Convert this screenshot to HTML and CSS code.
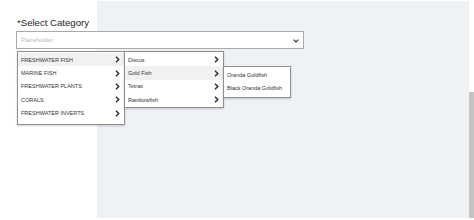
FILE: index.html
```html
<!DOCTYPE html>
<html lang="en">
<head>
  <meta charset="UTF-8" />
  <meta name="viewport" content="width=device-width, initial-scale=1.0"/>
  <title>Select Category</title>
  <link rel="stylesheet" href="styles.css">
</head>
<body>
<div class="page">
  <div class="form">
    <label class="label">*Select Category</label>
    <div class="field">
      <div class="select">
        <span class="placeholder">Placeholder</span>
        <svg class="caret" width="6" height="4" viewBox="0 0 6 4"><path d="M0.7 0.7 L3 3 L5.3 0.7" fill="none" stroke="#333" stroke-width="1.2"/></svg>
      </div>
      <div class="cascader">
        <ul class="menu menu-main">
          <li class="item active">FRESHWATER FISH<svg class="arrow" width="5" height="7" viewBox="0 0 5 7"><path d="M1 0.8 L3.8 3.5 L1 6.2" fill="none" stroke="#222" stroke-width="1.3"/></svg></li>
          <li class="item">MARINE FISH<svg class="arrow" width="5" height="7" viewBox="0 0 5 7"><path d="M1 0.8 L3.8 3.5 L1 6.2" fill="none" stroke="#222" stroke-width="1.3"/></svg></li>
          <li class="item">FRESHWATER PLANTS<svg class="arrow" width="5" height="7" viewBox="0 0 5 7"><path d="M1 0.8 L3.8 3.5 L1 6.2" fill="none" stroke="#222" stroke-width="1.3"/></svg></li>
          <li class="item">CORALS<svg class="arrow" width="5" height="7" viewBox="0 0 5 7"><path d="M1 0.8 L3.8 3.5 L1 6.2" fill="none" stroke="#222" stroke-width="1.3"/></svg></li>
          <li class="item">FRESHWATER INVERTS<svg class="arrow" width="5" height="7" viewBox="0 0 5 7"><path d="M1 0.8 L3.8 3.5 L1 6.2" fill="none" stroke="#222" stroke-width="1.3"/></svg></li>
        </ul>
        <ul class="menu menu-sub">
          <li class="item">Discus<svg class="arrow" width="5" height="7" viewBox="0 0 5 7"><path d="M1 0.8 L3.8 3.5 L1 6.2" fill="none" stroke="#222" stroke-width="1.3"/></svg></li>
          <li class="item active">Gold Fish<svg class="arrow" width="5" height="7" viewBox="0 0 5 7"><path d="M1 0.8 L3.8 3.5 L1 6.2" fill="none" stroke="#222" stroke-width="1.3"/></svg></li>
          <li class="item">Tetras<svg class="arrow" width="5" height="7" viewBox="0 0 5 7"><path d="M1 0.8 L3.8 3.5 L1 6.2" fill="none" stroke="#222" stroke-width="1.3"/></svg></li>
          <li class="item">Rainbowfish<svg class="arrow" width="5" height="7" viewBox="0 0 5 7"><path d="M1 0.8 L3.8 3.5 L1 6.2" fill="none" stroke="#222" stroke-width="1.3"/></svg></li>
        </ul>
        <ul class="menu menu-leaf">
          <li class="item">Oranda Goldfish</li>
          <li class="item">Black Oranda Goldfish</li>
        </ul>
      </div>
    </div>
  </div>
  <div class="scroll-thumb"></div>
</div>
</body>
</html>
```

FILE: styles.css
```css
body {
  margin: 0;
  font-family: 'Liberation Sans', Arial, sans-serif;
  color: #333;
  background: #fff;
}
.page {
  position: relative;
  width: 474px;
  height: 220px;
  overflow: hidden;
  background: linear-gradient(#eef1f6, #eef1f6) 97px 1px / 372px 217px no-repeat, #fff;
}
.form {
  padding: 15px 0 0 16px;
  width: 288px;
}
.label {
  display: block;
  font-size: 9.6px;
  color: #222;
  line-height: 16px;
  padding-left: 1px;
}
.field {
  position: relative;
}
.select {
  height: 16px;
  border: 1px solid #a9a9a9;
  background: #fff;
  display: flex;
  align-items: center;
  justify-content: space-between;
  padding: 0 4px;
}
.placeholder {
  font-size: 6px;
  color: #b8b8b8;
}
.caret {
  display: block;
  margin-top: 1px;
}
.cascader {
  position: absolute;
  top: 20px;
  left: 1px;
  display: flex;
  align-items: flex-start;
}
.menu {
  list-style: none;
  margin: 0;
  padding: 1px 0 2px;
  background: #fff;
  border: 1px solid #8f8f8f;
  box-shadow: 0 1px 2px rgba(0, 0, 0, 0.18);
}
.menu-main {
  width: 106px;
  padding-bottom: 4px;
}
.menu-sub {
  width: 98px;
  margin-left: -1px;
  padding-bottom: 0;
}
.menu-leaf {
  width: 66px;
  margin-left: -1px;
  margin-top: 15px;
}
.item {
  height: 13.4px;
  display: flex;
  align-items: center;
  justify-content: space-between;
  padding: 0 4px 0 3px;
  font-size: 5.5px;
  color: #333;
  white-space: nowrap;
}
.item.active {
  background: #f1f1f1;
}
.arrow {
  display: block;
  flex: none;
}
.scroll-thumb {
  position: absolute;
  right: 0;
  top: 92px;
  width: 5px;
  height: 126px;
  background: #c3c3c3;
}
```
